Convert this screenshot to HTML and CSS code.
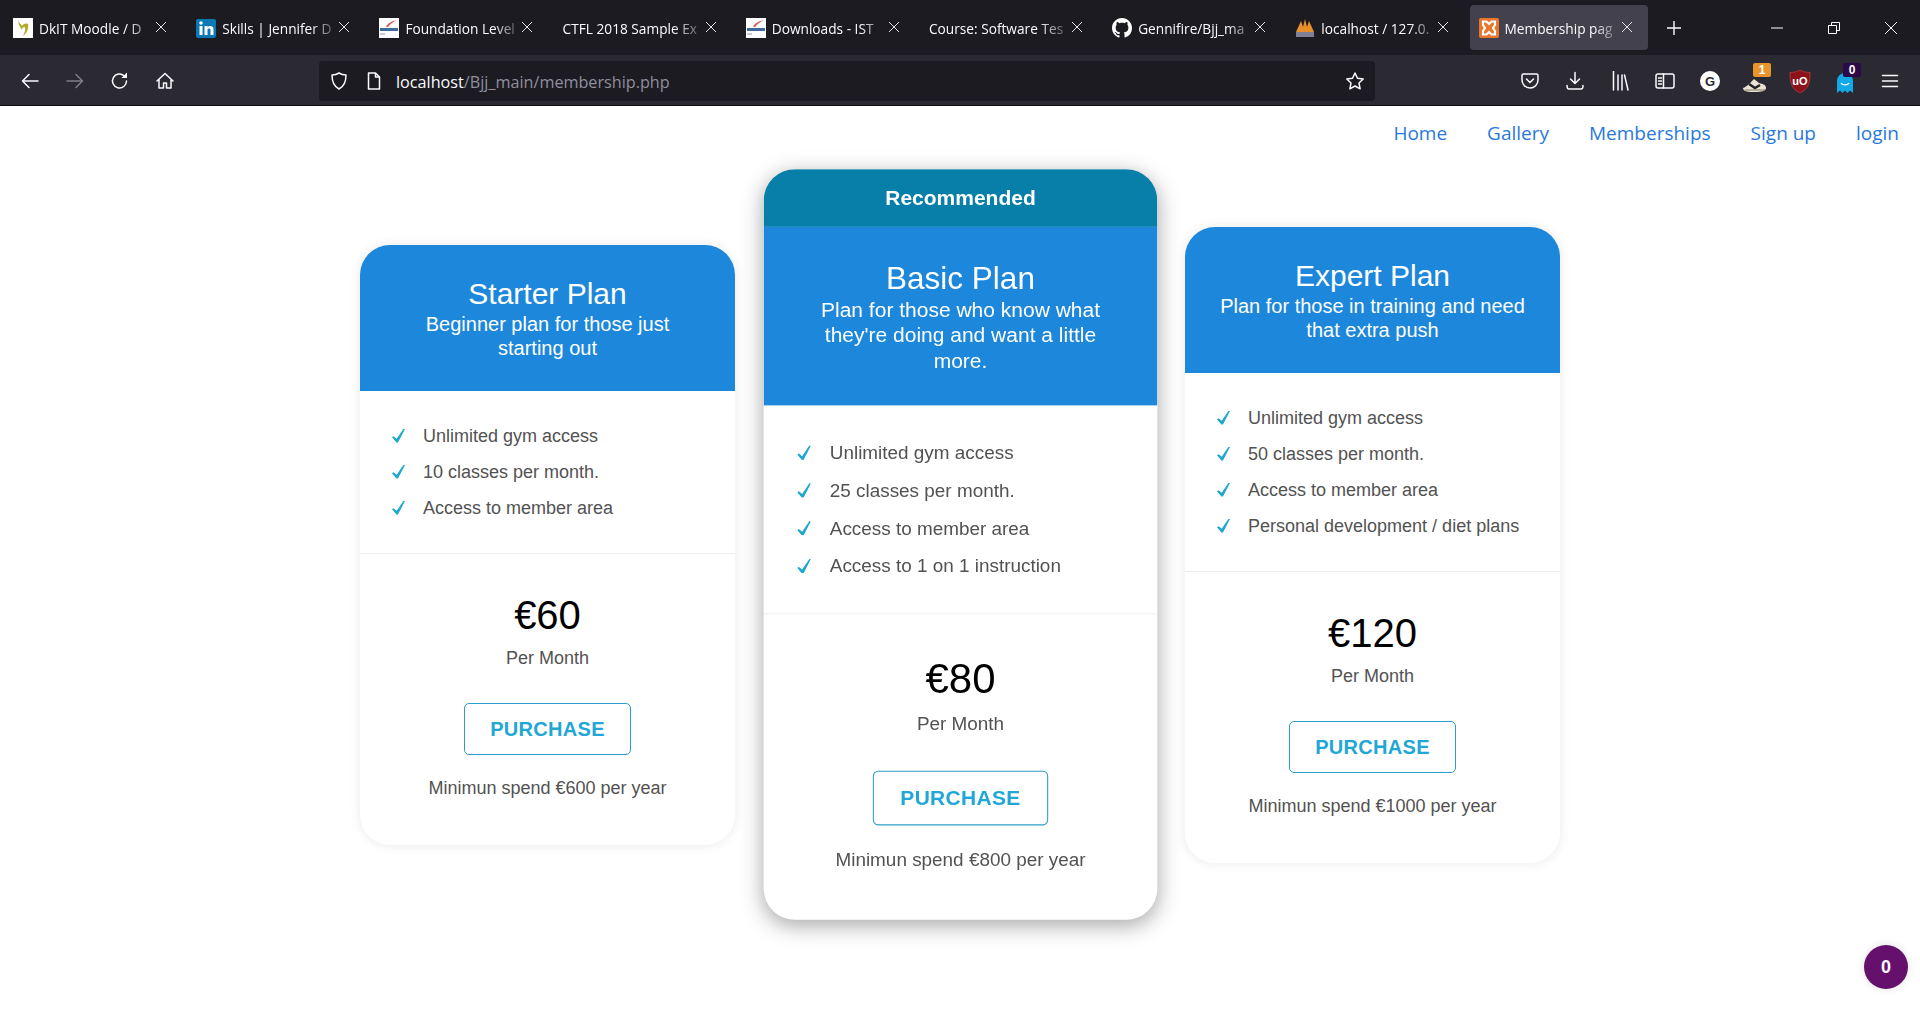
FILE: index.html
```html
<!DOCTYPE html>
<html lang="en">
<head>
<meta charset="utf-8">
<title>Membership page</title>
<link rel="stylesheet" href="styles.css">
</head>
<body>
<header class="browser">
  <div class="tabbar">
    <div class="tabs">
      <div class="tab"><svg class="fav" viewBox="0 0 20 20"><rect width="20" height="20" fill="#fff"/><path d="M5 2c1 3 3 4 4 6 1-2 4-3 6-2 1 4-1 9-5 12 1-3 3-6 2-9-2 0-3 1-3 3L6 7z" fill="#b5a82a"/></svg><span class="tab-title">DkIT Moodle / D</span><svg class="tab-x" viewBox="0 0 12 12"><path d="M1 1l10 10M11 1 1 11"/></svg></div>
      <div class="tab"><svg class="fav" viewBox="0 0 20 20"><rect y="1" width="20" height="19" rx="2" fill="#0a78b5"/><rect x="3.500" y="8" width="3" height="9" fill="#fff"/><circle cx="5" cy="5" r="1.800" fill="#fff"/><path d="M8.500 8h3v1.400c1.400-2 6-2 6 2V17h-3v-5c0-2-3-2-3 0v5h-3z" fill="#fff"/></svg><span class="tab-title">Skills | Jennifer D</span><svg class="tab-x" viewBox="0 0 12 12"><path d="M1 1l10 10M11 1 1 11"/></svg></div>
      <div class="tab"><svg class="fav" viewBox="0 0 20 20"><rect width="20" height="20" fill="#fff"/><path d="M7 9c2-4 6-6 11-7-4 2-7 4-9 7z" fill="#d8584e"/><rect x="1" y="10" width="18" height="3" fill="#3f6a9c"/><rect x="1" y="15" width="5" height="2" fill="#c8cfd8"/></svg><span class="tab-title">Foundation Level</span><svg class="tab-x" viewBox="0 0 12 12"><path d="M1 1l10 10M11 1 1 11"/></svg></div>
      <div class="tab"><span class="tab-title">CTFL 2018 Sample Ex</span><svg class="tab-x" viewBox="0 0 12 12"><path d="M1 1l10 10M11 1 1 11"/></svg></div>
      <div class="tab"><svg class="fav" viewBox="0 0 20 20"><rect width="20" height="20" fill="#fff"/><path d="M7 9c2-4 6-6 11-7-4 2-7 4-9 7z" fill="#d8584e"/><rect x="1" y="10" width="18" height="3" fill="#3f6a9c"/><rect x="1" y="15" width="5" height="2" fill="#c8cfd8"/></svg><span class="tab-title">Downloads - IST</span><svg class="tab-x" viewBox="0 0 12 12"><path d="M1 1l10 10M11 1 1 11"/></svg></div>
      <div class="tab"><span class="tab-title">Course: Software Tes</span><svg class="tab-x" viewBox="0 0 12 12"><path d="M1 1l10 10M11 1 1 11"/></svg></div>
      <div class="tab"><svg class="fav" viewBox="0 0 16 16"><path fill="#fff" d="M8 0C3.580 0 0 3.580 0 8c0 3.540 2.290 6.530 5.470 7.590.4.070.55-.17.55-.38 0-.19-.01-.82-.01-1.490-2.010.37-2.530-.49-2.690-.94-.09-.23-.48-.94-.82-1.130-.28-.15-.68-.52-.01-.53.63-.01 1.080.58 1.230.82.72 1.210 1.870.87 2.330.66.07-.52.28-.87.51-1.070-1.780-.2-3.640-.89-3.640-3.950 0-.87.31-1.590.82-2.150-.08-.2-.36-1.020.08-2.120 0 0 .67-.21 2.200.82.64-.18 1.320-.27 2-.27s1.360.09 2 .27c1.530-1.040 2.200-.82 2.200-.82.44 1.100.16 1.920.08 2.120.51.56.82 1.270.82 2.150 0 3.070-1.870 3.750-3.650 3.950.29.25.54.73.54 1.480 0 1.070-.01 1.930-.01 2.200 0 .21.15.46.55.38A8.010 8.010 0 0 0 16 8c0-4.420-3.580-8-8-8z"/></svg><span class="tab-title">Gennifire/Bjj_ma</span><svg class="tab-x" viewBox="0 0 12 12"><path d="M1 1l10 10M11 1 1 11"/></svg></div>
      <div class="tab"><svg class="fav" viewBox="0 0 20 20"><path d="M1 14 6 3l2 6 2-8 2 8 2-6 5 11z" fill="#e8912a"/><rect x="1" y="14" width="18" height="5" fill="#7f7f95"/></svg><span class="tab-title">localhost / 127.0.</span><svg class="tab-x" viewBox="0 0 12 12"><path d="M1 1l10 10M11 1 1 11"/></svg></div>
      <div class="tab tab-active"><svg class="fav" viewBox="0 0 20 20"><rect width="20" height="20" rx="2" fill="#e9762b"/><path d="M4 3.500h3.500L10 6l2.500-2.500H16V7l-2 3 2 3v3.500h-3.500L10 14l-2.500 2.500H4V13l2-3-2-3z" fill="none" stroke="#fff" stroke-width="2.200"/></svg><span class="tab-title">Membership pag</span><svg class="tab-x" viewBox="0 0 12 12"><path d="M1 1l10 10M11 1 1 11"/></svg></div>
    </div>
    <svg class="newtab" viewBox="0 0 16 16"><path d="M8 1v14M1 8h14" stroke="#fbfbfe" stroke-width="1.400" fill="none"/></svg>
    <div class="winctl">
      <svg class="winbtn" viewBox="0 0 14 14"><path d="M1 7h12" stroke="#fff" fill="none"/></svg>
      <svg class="winbtn" viewBox="0 0 14 14"><path d="M1.500 4.500h8v8h-8zM4.500 4.500v-3h8v8h-3" stroke="#fff" fill="none"/></svg>
      <svg class="winbtn" viewBox="0 0 14 14"><path d="M1 1l12 12M13 1 1 13" stroke="#fff" fill="none"/></svg>
    </div>
  </div>
  <div class="toolbar">
    <div class="navbtns">
      <svg class="tbi" viewBox="0 0 20 20"><path d="M18 10H3M9 3.500 2.500 10 9 16.500" class="ln"/></svg>
      <svg class="tbi dim" viewBox="0 0 20 20"><path d="M2 10h15M11 3.500l6.500 6.500-6.500 6.500" class="ln"/></svg>
      <svg class="tbi" viewBox="0 0 20 20"><path d="M16.500 10a7 7 0 1 1-2.300-5.200" class="ln"/><path d="M17 1.500v5.500h-5.500z" fill="#fbfbfe"/></svg>
      <svg class="tbi" viewBox="0 0 20 20"><path d="M2 10 10 2.500 18 10M4 8.500V17h4.500v-5h3v5H16V8.500" class="ln"/></svg>
    </div>
    <div class="urlbar">
      <svg class="urlicon" viewBox="0 0 20 20"><path d="M10 2c2 1.300 4.500 2 7 2 0 6-1 11-7 14C4 15 3 10 3 4c2.500 0 5-.7 7-2z" class="ln"/></svg>
      <svg class="urlicon" viewBox="0 0 20 20"><path d="M4.500 2h7l4 4v12h-11zM11.500 2v4h4" class="ln"/></svg>
      <span class="url"><span class="url-host">localhost</span>/Bjj_main/membership.php</span>
      <svg class="urlicon star" viewBox="0 0 20 20"><path d="m10 2 2.500 5.300 5.700.7-4.200 4 1.100 5.800L10 15l-5.100 2.800L6 12 1.800 8l5.700-.7z" class="ln"/></svg>
    </div>
    <div class="addons">
      <svg class="tbi" viewBox="0 0 20 20"><path d="M3.500 3h13A1.500 1.500 0 0 1 18 4.500V9a8 8 0 0 1-16 0V4.500A1.500 1.500 0 0 1 3.500 3zM6.500 8l3.500 3.500L13.500 8" class="ln"/></svg>
      <svg class="tbi" viewBox="0 0 20 20"><path d="M10 1.500v11M5.500 8l4.500 4.500L14.500 8M2 14.500c0 2 .5 3.500 2 3.500h12c1.500 0 2-1.500 2-3.500" class="ln"/></svg>
      <svg class="tbi" viewBox="0 0 20 20"><path d="M3.500 0v19M8 4v15M12 4v15M14.500 4 18 19" class="ln"/></svg>
      <svg class="tbi" viewBox="0 0 20 20"><rect x="1" y="3" width="18" height="14" rx="2" class="ln"/><path d="M8.500 3v14M3.500 7h3M3.500 10h3M3.500 13h3" class="ln"/></svg>
      <span class="addon-g">G</span>
      <span class="addon"><svg class="addon-svg" viewBox="0 0 24 24"><path d="M0 19c4-1 8-6 11-9l5 4c4 1 7 2 7 5 0 3-5 4-11 4S0 23 0 19z" fill="#e9e4d6"/><path d="M6 15l6 4 5-3" stroke="#222" stroke-width="2.500" fill="none"/><path d="M2 21h20" stroke="#8a7a5a" fill="none"/></svg><span class="badge badge-orange">1</span></span>
      <svg class="addon-shield" viewBox="0 0 24 24"><path d="M12 1c3 1.800 6 2.500 10 2.500 0 10-1 16-10 20.500C3 19.500 2 13.500 2 3.500 6 3.500 9 2.800 12 1z" fill="#8c1219" stroke="#a8323a"/><text x="12" y="16" class="ub">uO</text></svg>
      <span class="addon"><svg class="addon-svg" viewBox="0 0 24 24"><path d="M4 24V12a8 8 0 0 1 16 0v12l-3-2.500-2.500 2.500L12 21.500 9.500 24 7 21.500z" fill="#12a9e6"/><path d="M8 14c1.500 2.500 6.500 2.500 8 0" stroke="#fff" stroke-width="1.300" fill="none"/></svg><span class="badge badge-purple">0</span></span>
      <svg class="tbi" viewBox="0 0 20 20"><path d="M2.500 4.500h15M2.500 10h15M2.500 15.500h15" class="ln"/></svg>
    </div>
  </div>
</header>

<nav class="sitenav">
  <a href="#">Home</a>
  <a href="#">Gallery</a>
  <a href="#">Memberships</a>
  <a href="#">Sign up</a>
  <a href="#">login</a>
</nav>

<main class="plans">
  <article class="card">
    <div class="card-head">
      <h2>Starter Plan</h2>
      <p>Beginner plan for those just starting out</p>
    </div>
    <ul class="features">
      <li>Unlimited gym access</li>
      <li>10 classes per month.</li>
      <li>Access to member area</li>
    </ul>
    <div class="pricing">
      <div class="price">€60</div>
      <div class="per">Per Month</div>
      <a class="buy" href="#">PURCHASE</a>
      <div class="min">Minimun spend €600 per year</div>
    </div>
  </article>

  <article class="card card-featured">
    <div class="ribbon">Recommended</div>
    <div class="card-head">
      <h2>Basic Plan</h2>
      <p>Plan for those who know what they're doing and want a little more.</p>
    </div>
    <ul class="features">
      <li>Unlimited gym access</li>
      <li>25 classes per month.</li>
      <li>Access to member area</li>
      <li>Access to 1 on 1 instruction</li>
    </ul>
    <div class="pricing">
      <div class="price">€80</div>
      <div class="per">Per Month</div>
      <a class="buy" href="#">PURCHASE</a>
      <div class="min">Minimun spend €800 per year</div>
    </div>
  </article>

  <article class="card">
    <div class="card-head">
      <h2>Expert Plan</h2>
      <p>Plan for those in training and need that extra push</p>
    </div>
    <ul class="features">
      <li>Unlimited gym access</li>
      <li>50 classes per month.</li>
      <li>Access to member area</li>
      <li>Personal development / diet plans</li>
    </ul>
    <div class="pricing">
      <div class="price">€120</div>
      <div class="per">Per Month</div>
      <a class="buy" href="#">PURCHASE</a>
      <div class="min">Minimun spend €1000 per year</div>
    </div>
  </article>
</main>

<button class="cart-bubble">0</button>
</body>
</html>
```
FILE: styles.css
```css
* { box-sizing: border-box; }
html, body { margin: 0; padding: 0; }
body { width: 1920px; height: 1030px; overflow: hidden; background: #fff; font-family: "Liberation Sans", Arial, sans-serif; color: #525252; position: relative; }

.browser { height: 106px; background: #2b2a33; border-bottom: 1px solid #0c0c0d; }
.tabbar { height: 55px; background: #1c1b22; display: flex; align-items: flex-start; }
.tabs { display: flex; gap: 5.200px; padding: 5px 0 0 4px; }
.tab { width: 178px; height: 45px; display: flex; align-items: center; padding: 0 15px 0 9px; gap: 5px; border-radius: 4px; color: #fbfbfe; font-family: "Open Sans", sans-serif; font-size: 13.700px; }
.tab-active { background: #42414d; }
.fav { width: 20px; height: 20px; flex: none; margin-right: 1px; }
.tab-title { flex: 1; min-width: 0; padding-top: 2px; overflow: hidden; white-space: nowrap; -webkit-mask-image: linear-gradient(to right, #000 80%, rgba(0, 0, 0, .25) 100%); mask-image: linear-gradient(to right, #000 80%, rgba(0, 0, 0, .25) 100%); }
.tab-x { flex: none; width: 12px; height: 12px; fill: none; stroke: #e4e4e8; stroke-width: 1; margin-top: -1px; }
.newtab { width: 16px; height: 16px; margin: 20px 0 0 18px; flex: none; }
.winctl { margin-left: auto; display: flex; gap: 43px; padding: 21px 22px 0 0; }
.winbtn { width: 14px; height: 14px; }

.toolbar { height: 50px; padding-top: 2px; display: flex; align-items: center; }
.ln { fill: none; stroke: #fbfbfe; stroke-width: 1.500; stroke-linejoin: round; stroke-linecap: round; }
.tbi { width: 20px; height: 20px; flex: none; }
.dim { opacity: .4; }
.navbtns { display: flex; gap: 25px; padding-left: 20px; width: 319px; }
.urlbar { width: 1056px; height: 40px; background: #1c1b22; border-radius: 4px; display: flex; align-items: center; padding: 0 10px; gap: 15px; }
.urlicon { width: 20px; height: 20px; flex: none; }
.url { flex: 1; margin-left: -3px; padding-top: 1px; font-family: "Open Sans", sans-serif; font-size: 16.200px; color: #8f8f9d; }
.url-host { color: #fbfbfe; }
.addons { display: flex; align-items: center; gap: 25px; padding-left: 145px; }
.addon-g { width: 20px; height: 20px; border-radius: 50%; background: #fff; color: #2b2a33; font-size: 13px; font-weight: 700; display: flex; align-items: center; justify-content: center; flex: none; }
.addon { position: relative; width: 20px; height: 20px; flex: none; }
.addon-svg { width: 24px; height: 24px; display: block; margin: -2px; }
.addon-shield { width: 24px; height: 24px; margin: -2px; flex: none; }
.ub { font-size: 11px; font-weight: 700; fill: #fff; text-anchor: middle; font-family: "Liberation Sans", sans-serif; }
.badge { position: absolute; top: -8px; right: -6px; min-width: 18px; height: 14px; border-radius: 2px; font-size: 12px; line-height: 14px; font-weight: 700; text-align: center; color: #fff; }
.badge-orange { background: #e8952b; }
.badge-purple { background: #2b0a47; }

.sitenav { height: 54px; display: flex; justify-content: flex-end; align-items: center; gap: 40px; padding-right: 21px; font-family: "Open Sans", sans-serif; font-size: 19px; }
.sitenav a { color: #2a78dd; text-decoration: none; }

.plans { width: 1200px; margin: 0 auto; height: 770px; display: grid; grid-template-columns: repeat(3, 375px); column-gap: 37.500px; align-items: center; align-content: start; padding-top: 27px; }
.card { background: #fff; border-radius: 30px; overflow: hidden; box-shadow: 0 0 12px rgba(0, 0, 0, .09); }
.card-featured { transform: scale(1.05); box-shadow: 0 5px 20px rgba(0, 0, 0, .34); }
.ribbon { height: 55px; background: #087fa8; color: #fff; font-size: 20px; font-weight: 700; display: flex; align-items: center; justify-content: center; }
.card-head { background: #1d87db; color: #fff; text-align: center; padding: 31px 32px; }
.card-head h2 { margin: 0; font-size: 30px; line-height: 36px; font-weight: 400; }
.card-head p { margin: 0; font-size: 20px; line-height: 24px; }
.features { list-style: none; margin: 0; padding: 27px 32px; border-bottom: 1px solid #eee; }
.features li { height: 36px; line-height: 36px; font-size: 18px; display: flex; align-items: center; gap: 18px; }
.features li::before { content: ""; flex: none; width: 13px; height: 14px; background: #1fa7cf; clip-path: polygon(0 62%, 12% 56%, 36% 74%, 90% 0, 100% 3%, 46% 100%, 34% 100%); }
.pricing { text-align: center; padding-top: 36px; height: 291px; }
.price { font-size: 40px; line-height: 50px; color: #000; }
.per { font-size: 18px; line-height: 24px; margin-top: 6px; }
.buy { display: block; width: 167px; height: 52px; margin: 33px auto 0; border: 1px solid #2a9fc9; border-radius: 5px; color: #21a7d6; font-size: 20px; line-height: 50px; font-weight: 700; letter-spacing: .3px; text-decoration: none; }
.min { font-size: 18px; line-height: 24px; margin-top: 21px; }

.cart-bubble { position: absolute; left: 1864px; top: 945px; width: 44px; height: 44px; border-radius: 50%; border: 0; padding: 0; background: #66106e; color: #fff; font-family: "Liberation Sans", sans-serif; font-size: 18px; font-weight: 700; box-shadow: 0 0 8px rgba(0, 0, 0, .12); }
```
